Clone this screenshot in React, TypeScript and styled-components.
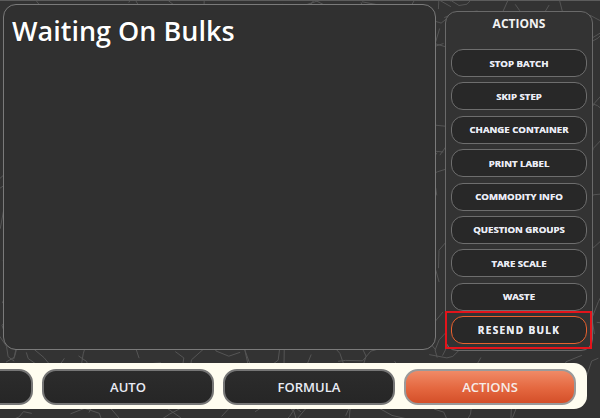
import React from 'react';
import styled, { createGlobalStyle } from 'styled-components';

const Global = createGlobalStyle`
  html, body { margin: 0; padding: 0; background: #333; }
  body { font-family: "Open Sans", "Noto Sans", sans-serif; }
  * { box-sizing: border-box; }
`;

const Screen = styled.div`
  position: relative;
  width: 600px;
  height: 418px;
  overflow: hidden;
  background: #333333;
  border-top: 1px solid #5c5c5c;
  display: flex;
  flex-direction: column;
`;

const Texture = styled.svg`
  position: absolute;
  inset: 0;
  z-index: 0;
`;

const TopRow = styled.div`
  position: relative;
  z-index: 1;
  display: flex;
  align-items: flex-start;
  gap: 9px;
  padding: 3px 0 0 3px;
`;

const MainPanel = styled.div`
  width: 433px;
  height: 346px;
  background: #303030;
  border: 1.5px solid #7a7a7a;
  border-radius: 13px;
  padding: 8px 0 0 8px;
`;

const Title = styled.h1`
  margin: 0;
  font-size: 27px;
  font-weight: 600;
  line-height: 36px;
  color: #ffffff;
  text-shadow: 0 0 1px rgba(0, 0, 0, 0.6);
`;

const ActionsPanel = styled.div`
  margin-top: 7px;
  width: 148px;
  height: 340px;
  border: 1.5px solid #6a6a6a;
  border-radius: 12px;
  background: #333333;
  padding: 3px 5px 0 5px;
  display: flex;
  flex-direction: column;
`;

const PanelHeader = styled.div`
  text-align: center;
  color: #f2f2f2;
  font-size: 12px;
  font-weight: 700;
  line-height: 17px;
  margin-bottom: 17px;
`;

const ButtonList = styled.div`
  display: flex;
  flex-direction: column;
  gap: 5.4px;
`;

const ActionButton = styled.button<{ $accent?: boolean }>`
  height: 28px;
  width: 136px;
  border-radius: 12px;
  border: 1.5px solid ${(p) => (p.$accent ? '#e8612f' : '#6e6e6e')};
  background: #282828;
  color: #e9ebf3;
  font-family: "Open Sans", "Noto Sans", sans-serif;
  font-size: ${(p) => (p.$accent ? '10px' : '9.6px')};
  font-weight: 700;
  letter-spacing: ${(p) => (p.$accent ? '1.3px' : '0')};
  text-shadow: 0 0 0.6px #e9ebf3;
  padding: 0;
  cursor: pointer;
`;

const Highlight = styled.div`
  margin: -5px -5px -5px -6px;
  padding: 3px 3px 3px 4px;
  border: 2px solid #e4141b;
`;

const BottomBar = styled.div`
  position: relative;
  z-index: 1;
  margin-top: 12px;
  width: 587px;
  height: 46px;
  background: #fffdf0;
  border-radius: 0 13px 13px 0;
  display: flex;
  align-items: center;
  gap: 9px;
  overflow: hidden;
`;

const NavButton = styled.button<{ $active?: boolean }>`
  flex: 0 0 172px;
  height: 36px;
  border-radius: 14px;
  border: 2px solid ${(p) => (p.$active ? '#9a9a9a' : '#767676')};
  background: ${(p) =>
    p.$active
      ? 'linear-gradient(#f08a66, #e4673f 55%, #d44f29)'
      : 'linear-gradient(#2c2c2c, #262626)'};
  color: ${(p) => (p.$active ? '#f6ece8' : '#e9ecf5')};
  font-family: "Open Sans", "Noto Sans", sans-serif;
  font-size: 13px;
  font-weight: 600;
  padding: 0;
  margin-top: 1px;
`;

const FirstNav = styled(NavButton)`
  margin-left: -139px;
`;

function makeCracks() {
  let seed = 12345;
  const rnd = () => {
    seed = (seed * 1103515245 + 12345) & 0x7fffffff;
    return seed / 0x7fffffff;
  };
  const lines: string[] = [];
  for (let i = 0; i < 320; i++) {
    let x = rnd() * 620 - 10;
    let y = rnd() * 440 - 10;
    const pts = [`${x.toFixed(1)},${y.toFixed(1)}`];
    const n = 2 + Math.floor(rnd() * 3);
    let ang = rnd() * Math.PI * 2;
    for (let k = 0; k < n; k++) {
      ang += (rnd() - 0.5) * 2.2;
      const len = 6 + rnd() * 14;
      x += Math.cos(ang) * len;
      y += Math.sin(ang) * len;
      pts.push(`${x.toFixed(1)},${y.toFixed(1)}`);
    }
    lines.push(pts.join(' '));
  }
  return lines;
}

const cracks = makeCracks();

const actions = [
  'STOP BATCH',
  'SKIP STEP',
  'CHANGE CONTAINER',
  'PRINT LABEL',
  'COMMODITY INFO',
  'QUESTION GROUPS',
  'TARE SCALE',
  'WASTE',
];

export default function App() {
  return (
    <>
      <Global />
      <Screen>
        <Texture width="600" height="418" viewBox="0 0 600 418">
          {cracks.map((p, i) => (
            <polyline key={i} points={p} fill="none" stroke="#555555" strokeWidth="1" />
          ))}
        </Texture>
        <TopRow>
          <MainPanel>
            <Title>Waiting On Bulks</Title>
          </MainPanel>
          <ActionsPanel>
            <PanelHeader>ACTIONS</PanelHeader>
            <ButtonList>
              {actions.map((a) => (
                <ActionButton key={a}>{a}</ActionButton>
              ))}
              <Highlight>
                <ActionButton $accent>RESEND BULK</ActionButton>
              </Highlight>
            </ButtonList>
          </ActionsPanel>
        </TopRow>
        <BottomBar>
          <FirstNav />
          <NavButton>AUTO</NavButton>
          <NavButton>FORMULA</NavButton>
          <NavButton $active>ACTIONS</NavButton>
        </BottomBar>
      </Screen>
    </>
  );
}
